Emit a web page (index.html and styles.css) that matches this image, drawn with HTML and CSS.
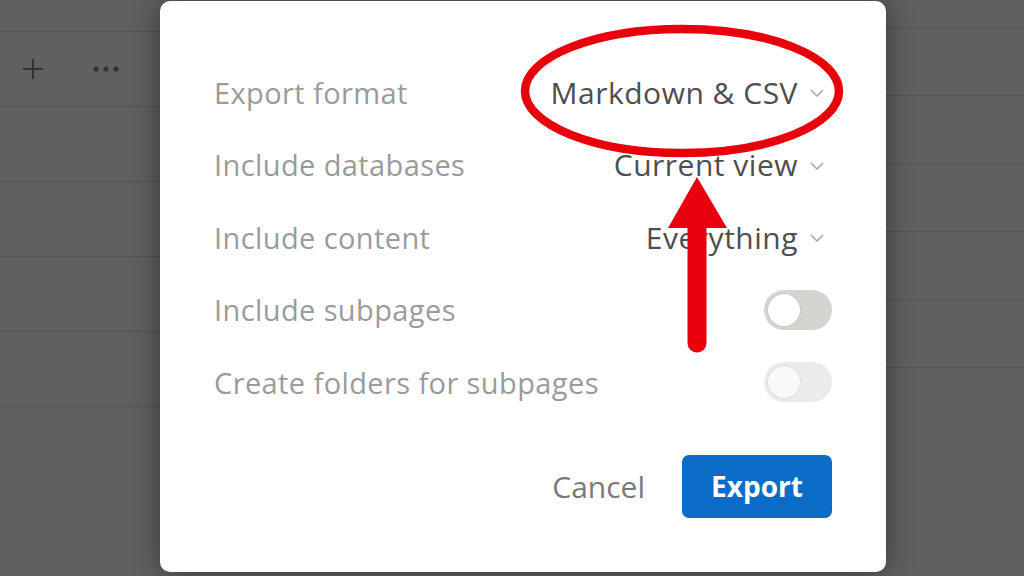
FILE: index.html
```html
<!DOCTYPE html>
<html lang="en">
<head>
    <meta charset="UTF-8">
    <meta name="viewport" content="width=device-width, initial-scale=1.0">
    <title>Export</title>
    <link rel="stylesheet" href="styles.css">
</head>
<body>
    <div class="page">
        <!-- Table behind the dialog, left part -->
        <aside class="side side-left">
            <div class="side-top"></div>
            <div class="row toolbar">
                <svg class="tool" width="22" height="22" viewBox="0 0 22 22">
                    <path d="M11 1v20M1 11h20" stroke="#333" stroke-width="2" fill="none"/>
                </svg>
                <svg class="tool" width="28" height="8" viewBox="0 0 28 8">
                    <circle cx="4" cy="4" r="2.6" fill="#333"/>
                    <circle cx="14" cy="4" r="2.6" fill="#333"/>
                    <circle cx="24" cy="4" r="2.6" fill="#333"/>
                </svg>
            </div>
            <div class="row"></div>
            <div class="row"></div>
            <div class="row"></div>
            <div class="row"></div>
        </aside>

        <!-- Export dialog -->
        <section class="modal">
            <div class="option">
                <span class="label">Export format</span>
                <span class="value">Markdown &amp; CSV
                    <svg class="chevron" width="14" height="8" viewBox="0 0 14 8"><path d="M1 1l6 6 6-6" stroke="#a8a8a8" stroke-width="1.6" fill="none"/></svg>
                </span>
            </div>
            <div class="option">
                <span class="label">Include databases</span>
                <span class="value">Current view
                    <svg class="chevron" width="14" height="8" viewBox="0 0 14 8"><path d="M1 1l6 6 6-6" stroke="#a8a8a8" stroke-width="1.6" fill="none"/></svg>
                </span>
            </div>
            <div class="option">
                <span class="label">Include content</span>
                <span class="value">Everything
                    <svg class="chevron" width="14" height="8" viewBox="0 0 14 8"><path d="M1 1l6 6 6-6" stroke="#a8a8a8" stroke-width="1.6" fill="none"/></svg>
                </span>
            </div>
            <div class="option">
                <span class="label">Include subpages</span>
                <span class="toggle"><span class="knob"></span></span>
            </div>
            <div class="option">
                <span class="label">Create folders for subpages</span>
                <span class="toggle toggle-disabled"><span class="knob"></span></span>
            </div>

            <div class="actions">
                <button type="button" class="btn-cancel">Cancel</button>
                <button type="button" class="btn-export">Export</button>
            </div>

            <!-- red annotation drawn over the dialog -->
            <svg class="annotation" width="726" height="571" viewBox="0 0 726 571">
                <ellipse cx="522" cy="90" rx="157" ry="62" stroke="#e8000c" stroke-width="8.5" fill="none"/>
                <path d="M537 176L508 227H567Z" fill="#e8000c"/>
                <path d="M537 222V342" stroke="#e8000c" stroke-width="19" stroke-linecap="round"/>
            </svg>
        </section>

        <!-- Table behind the dialog, right part -->
        <aside class="side side-right">
            <div class="side-top"></div>
            <div class="row"></div>
            <div class="row"></div>
            <div class="row"></div>
            <div class="row"></div>
            <div class="row"></div>
        </aside>
    </div>
</body>
</html>
```

FILE: styles.css
```css
body {
    margin: 0;
    font-family: "Open Sans", "Noto Sans", sans-serif;
    background-color: #606060;
    overflow: hidden;
}
.page {
    display: flex;
    height: 576px;
}
.side {
    display: flex;
    flex-direction: column;
}
.side-left {
    width: 160px;
    flex-shrink: 0;
}
.side-right {
    flex: 1;
}
.side-left .side-top {
    height: 31px;
    border-bottom: 1px solid #535353;
}
.side-left .row {
    height: 74px;
    border-bottom: 1px solid #535353;
}
.side-right .side-top {
    height: 27px;
    border-bottom: 1px solid #555;
}
.side-right .row {
    height: 67px;
    border-bottom: 1px solid #555;
}
.toolbar {
    display: flex;
    align-items: center;
    gap: 48px;
    padding-left: 22px;
}
.modal {
    position: relative;
    width: 726px;
    height: 571px;
    margin-top: 1px;
    flex-shrink: 0;
    box-sizing: border-box;
    padding: 55px 54px 0 54px;
    background-color: #fff;
    border-radius: 10px;
    box-shadow: 0 0 28px rgba(0, 0, 0, 0.45);
    z-index: 1;
}
.option {
    display: flex;
    align-items: center;
    justify-content: space-between;
    height: 72.5px;
}
.label {
    font-size: 29px;
    letter-spacing: 0.4px;
    color: #9b9b9b;
}
.value {
    display: flex;
    align-items: center;
    gap: 12px;
    margin-right: 8px;
    font-size: 30px;
    letter-spacing: 0.5px;
    color: #4e4e4e;
}
.chevron {
    margin-top: 2px;
}
.toggle {
    width: 68px;
    height: 40px;
    border-radius: 20px;
    background-color: #d4d4d1;
    box-sizing: border-box;
    padding: 4px;
}
.knob {
    display: block;
    width: 32px;
    height: 32px;
    border-radius: 50%;
    background-color: #fff;
    box-shadow: 0 0 0 1px rgba(0, 0, 0, 0.06);
}
.toggle-disabled {
    background-color: #ebebea;
}
.toggle-disabled .knob {
    background-color: #f9f9f9;
}
.actions {
    display: flex;
    justify-content: flex-end;
    align-items: center;
    gap: 37px;
    margin-top: 36px;
}
.btn-cancel {
    border: none;
    background: none;
    padding: 0;
    font-family: inherit;
    font-size: 30px;
    color: #7a7a7a;
}
.btn-export {
    width: 150px;
    height: 63px;
    border: none;
    border-radius: 7px;
    background-color: #0b6cc8;
    color: #fff;
    font-family: inherit;
    font-size: 28px;
    font-weight: 700;
}
.annotation {
    position: absolute;
    left: 0;
    top: 0;
    pointer-events: none;
}
```
